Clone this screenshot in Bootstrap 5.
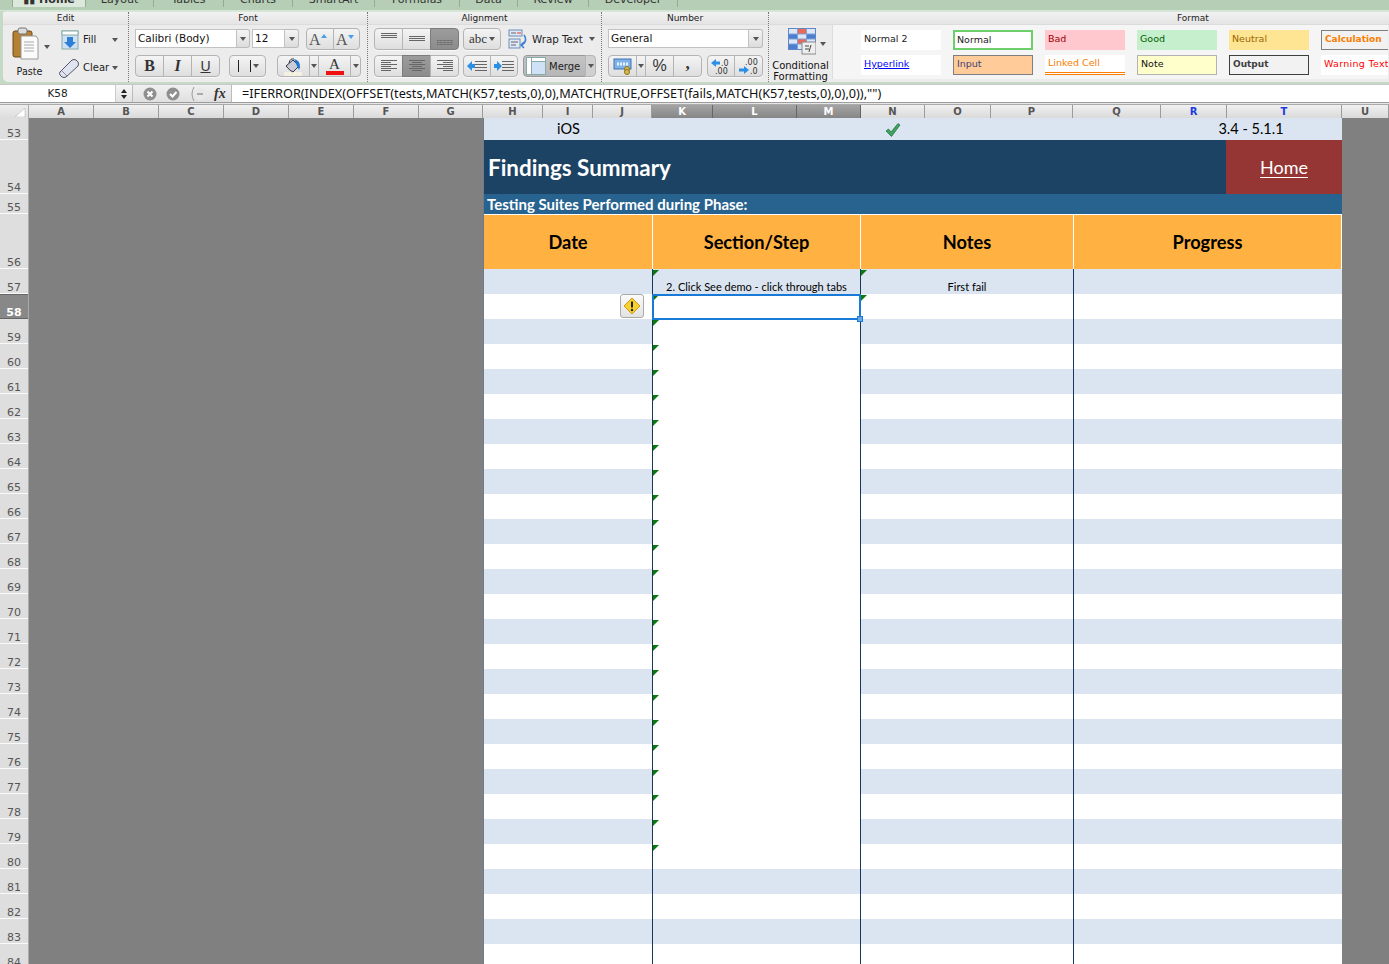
<!DOCTYPE html>
<html lang="en"><head><meta charset="utf-8"><title>Findings Summary</title>
<link href="https://cdn.jsdelivr.net/npm/bootstrap@5.3.0/dist/css/bootstrap.min.css" rel="stylesheet">
<style>
html,body{height:964px;overflow:hidden;background:#808080}
body{font-family:"DejaVu Sans",sans-serif;font-size:10px;line-height:1.2;color:#222}
.app{width:1389px;height:964px;overflow:hidden}
.app>*{flex:none}
.tabs{height:11px;overflow:hidden;background:#b5ceb5;border-bottom:1px solid #d4e6d4}
.tabx{height:10px;border-right:1px solid #8fae90;padding-top:0;text-align:center;color:#333;font-size:11px;line-height:6px;margin-top:-3px}
.tabx.on{background:#dbe8db;border-left:1px solid #8fae90;margin-left:12px;font-weight:700}
.ribbon{height:73px;background:#c4dac4;padding-left:3px;padding-bottom:2px}
.rib-in{height:71px;background:#ececec;border-radius:5px 0 0 5px;border-top:1px solid #d8e6d8}
.grp{flex:none;border-right:1px dotted #777}
.gt{height:13px;text-align:center;font-size:9px;line-height:13px;color:#222;background:linear-gradient(#f2f2f2,#e4e4e4);border-bottom:1px solid #dcdcdc}
.gb{padding-top:3px}
.rw{height:22px;margin-bottom:5px;align-items:stretch}
.btn.xb{--bs-btn-padding-x:0;--bs-btn-padding-y:0;--bs-btn-font-size:10px;--bs-btn-color:#333;--bs-btn-bg:#e6e6e6;--bs-btn-border-color:#b4b4b4;--bs-btn-border-radius:4px;--bs-btn-hover-bg:#e6e6e6;--bs-btn-hover-border-color:#b4b4b4;background:linear-gradient(#f4f4f4,#dedede);height:22px;display:flex;align-items:center;justify-content:center;flex:none;box-shadow:0 1px 0 #f8f8f8}
.btn.xb.act{background:linear-gradient(#9c9c9c,#8c8c8c);border-color:#7c7c7c}
.btn.xb.mer{background:linear-gradient(#c4c4c4,#b6b6b6);border-color:#999}
.arw{display:inline-block;width:0;height:0;border-left:3.5px solid transparent;border-right:3.5px solid transparent;border-top:4px solid #555;flex:none}
.sel-box{height:19px;margin-top:1px;background:#fff;border:1px solid #c2c2c2;font-size:10.5px;line-height:17px;padding-left:2px;color:#111;flex:none}
.sel-arw{height:19px;margin-top:1px;width:14px;background:linear-gradient(#f4f4f4,#dcdcdc);border:1px solid #bbb;border-left:0;border-radius:0 3px 3px 0;flex:none}
.lbl{font-size:10px;color:#222}
.wrapt{font-size:10.3px}
.paste{width:35px;margin-left:9px;margin-top:2px}
.paste-l{font-size:9.6px;margin-top:6px;color:#222;text-align:center}
.lite{width:57px}
.lite-r{height:22px;margin-bottom:6px}
.cf{width:63px;flex:none;padding-top:3px;text-align:center}
.cf-t{font-size:10px;line-height:11px;color:#111;margin-top:5px;white-space:nowrap}
.gallery{width:556px;height:54px;background:#f5f5f5;border-left:1px solid #ddd;padding:5px 0 0 28px;display:grid;grid-template-columns:repeat(6,80px);grid-template-rows:20px 20px;gap:5px 12px;overflow:hidden}
.gt-f{height:13px;font-size:9px;line-height:13px;padding-left:408px;background:linear-gradient(#f2f2f2,#e4e4e4);border-bottom:1px solid #dcdcdc}
.sw{font-size:9.5px;padding:0 0 0 3px;white-space:nowrap;line-height:18px;background:#fff}
.sw.bx{border:1px solid #7f7f7f}
.sw.bld{font-size:9px;font-weight:700}
.fbar{height:19px;background:#fff;border-top:1px solid #c9c9c9;border-bottom:1px solid #9c9c9c;margin-top:0}
.nm{width:116px;text-align:center;font-size:10.5px;line-height:17px;color:#222;border-right:1px solid #ccc}
.stp{width:17px;background:linear-gradient(#f6f6f6,#e2e2e2);border-right:1px solid #bbb}
.fbtn{width:99px;background:linear-gradient(#f0f0f0,#e0e0e0);border-right:1px solid #bbb;padding-left:10px}
.fx{font-family:"Liberation Serif",serif;font-style:italic;font-weight:700;font-size:14px;color:#333;line-height:17px}
.ftx{padding-left:10px;font-size:12.7px;line-height:17px;color:#111;white-space:nowrap;font-family:"Noto Sans",sans-serif}
.gap-s{height:1px;background:#e6e6e6}
.cols{height:14px;background:#d8d8d8;border-top:1px solid #aaa}
.corner{width:29px;position:relative;background:linear-gradient(#eee,#ddd);border-right:1px solid #aaa}
.ch{flex:none;height:13px;text-align:center;font-size:10px;font-weight:700;color:#555;line-height:13px;background:linear-gradient(#f0f0f0,#dadada);border-right:1px solid #9c9c9c}
.ch.dk{background:linear-gradient(#a4a4a4,#868686);color:#fff;border-right-color:#666}
.ch.bl{color:#1c3ce0}
.ch.fill{flex:1}
.main{align-items:flex-start}
.rh{width:28px;flex:none;background:#dedede;border-right:1px solid #aaa;box-sizing:content-box}
.rn{height:25px;border-bottom:1px solid #fafafa;font-size:11px;line-height:11px;color:#555;text-align:center;display:flex;align-items:flex-end;justify-content:center;padding-bottom:0}
.rn.cur{background:#888;color:#fff;font-weight:700;border-top:1px solid #666;border-bottom:1px solid #666}
.h22{height:22px}.h54{height:54px}.h20{height:20px}.h55{height:55px}
.gray{width:454px;flex:none;height:850px;background:#808080}
.sheet{width:859px;flex:none;background:#fff;border-left:1px solid #6f7b86;font-family:Lato,"Liberation Sans",sans-serif;color:#000}
.s53{height:22px;background:#dbe5f1;font-size:14.5px;line-height:22px}
.s54{height:54px;background:#1c4364;color:#fff}
.s54 .ttl{font-weight:700;font-size:22.4px;padding-left:4px;line-height:56px}
.homec{width:116px;background:#963634;text-align:center;font-size:18px;line-height:54px;flex:none}
.homec a{color:#fff;text-decoration:underline;text-underline-offset:3px}
.s55{height:20px;background:#28628f;color:#fff;font-weight:700;font-size:15px;line-height:21px;padding-left:3px}
.s56{height:55px;display:grid;grid-template-columns:169px 208px 213px 268px;background:#ffb142;border-top:1px solid #fff}
.s56>div{font-weight:700;font-size:18.2px;line-height:54px;text-align:center;border-right:1px solid #fff}
.sr{height:25px;display:grid;grid-template-columns:169px 208px 213px 268px}
.sr.bd{background:#dbe5f1}
.sr>div{position:relative;font-size:11px;line-height:12px;text-align:center;padding-top:12px;white-space:nowrap}
.sr>div:nth-child(-n+3){border-right:1px solid #17375d}
.k{background:#fff}
.tg::before{content:"";position:absolute;left:0;top:1px;border-top:6px solid #0a7a0a;border-right:6px solid transparent}
.cursel{position:absolute;left:-1px;top:0;width:209px;height:26px;border:2px solid #1a7ad8;z-index:2}
.hnd{position:absolute;right:-4px;bottom:-4px;width:6px;height:6px;background:#6aa8e8;border:1px solid #1a7ad8}
.wbtn{position:absolute;left:-33px;top:0;width:24px;height:24px;border:1px solid #aaa;border-radius:3px;background:linear-gradient(#fbfbfb,#e2e2e2);display:flex;align-items:center;justify-content:center;z-index:3;padding:0}
</style></head><body>
<svg width="0" height="0" class="position-absolute">
<defs>
<symbol id="ltop" viewBox="0 0 18 14"><path d="M1 1.500h16M1 3.500h16M1 5.500h16" stroke="#666" fill="none"/></symbol>
<symbol id="lmid" viewBox="0 0 18 14"><path d="M1 4.500h16M1 6.500h16M1 8.500h16" stroke="#666" fill="none"/></symbol>
<symbol id="lbot" viewBox="0 0 18 14"><path d="M1 8.500h16M1 10.500h16M1 12.500h16" stroke="#666" fill="none" stroke-dasharray="1 .4"/></symbol>
<symbol id="lleft" viewBox="0 0 18 14"><path d="M1 1.500h16M1 3.500h10M1 5.500h16M1 7.500h10M1 9.500h16M1 11.500h10" stroke="#666" fill="none"/></symbol>
<symbol id="lcen" viewBox="0 0 18 14"><path d="M1 1.500h16M4 3.500h10M1 5.500h16M4 7.500h10M1 9.500h16M4 11.500h10" stroke="#666" fill="none"/></symbol>
<symbol id="lright" viewBox="0 0 18 14"><path d="M1 1.500h16M7 3.500h10M1 5.500h16M7 7.500h10M1 9.500h16M7 11.500h10" stroke="#666" fill="none"/></symbol>
</defs></svg>
<div class="app d-flex flex-column">
 <div class="tabs d-flex">
  <div class="tabx on" style="width:74px">▮▮ Home</div><div class="tabx" style="width:68px">Layout</div><div class="tabx" style="width:70px">Tables</div><div class="tabx" style="width:69px">Charts</div><div class="tabx" style="width:82px">SmartArt</div><div class="tabx" style="width:85px">Formulas</div><div class="tabx" style="width:58px">Data</div><div class="tabx" style="width:71px">Review</div><div class="tabx" style="width:89px">Developer</div>
 </div>
 <div class="ribbon"><div class="rib-in d-flex">
  <!-- Edit -->
  <div class="grp" style="width:126px"><div class="gt">Edit</div>
   <div class="d-flex">
    <div class="paste">
     <svg width="27" height="33" viewBox="0 0 27 33"><rect x="1" y="4" width="19" height="26" rx="2" fill="#b57f34" stroke="#6e4a18"/><rect x="6" y="1" width="9" height="6" rx="2" fill="#ddd" stroke="#777"/><path d="M9 9h15l2 3v20H9z" fill="#fbfbfb" stroke="#999"/><path d="M12 15h10M12 18h10M12 21h10M12 24h10" stroke="#aaa"/></svg>
     <div class="paste-l">Paste</div>
    </div>
    <span class="arw" style="margin:20px 0 0 -3px"></span>
    <div class="lite" style="margin-left:11px;padding-top:4px">
     <div class="lite-r d-flex align-items-center"><svg width="18" height="20" viewBox="0 0 18 20"><rect x="1" y="1" width="16" height="18" fill="#cfe0f5" stroke="#8aa"/><rect x="1" y="1" width="16" height="4" fill="#fff" stroke="#8aa"/><path d="M6 7h6v5h3l-6 6-6-6h3z" fill="#2c7fd6"/></svg><span class="lbl me-auto" style="margin-left:4px">Fill</span><span class="arw"></span></div>
     <div class="lite-r d-flex align-items-center" style="margin-left:-2px"><svg width="20" height="20" viewBox="0 0 20 20"><path d="M1 14 13 2q2-1 4 0l2 2q1 2 0 4L7 19q-2 1-4 0l-2-2q-1-2 0-3z" fill="#dfe4f0" stroke="#556"/><path d="M3 13l5 5" stroke="#889"/></svg><span class="lbl me-auto" style="margin-left:4px">Clear</span><span class="arw" style="margin-left:-9px"></span></div>
    </div>
   </div>
  </div>
  <!-- Font -->
  <div class="grp" style="width:239px"><div class="gt">Font</div><div class="gb">
   <div class="rw d-flex" style="margin-left:6px">
    <div class="sel-box" style="width:102px">Calibri (Body)</div><div class="sel-arw d-flex align-items-center justify-content-center" style="width:13px"><span class="arw"></span></div>
    <div class="sel-box" style="width:33px;margin-left:2px">12</div><div class="sel-arw d-flex align-items-center justify-content-center"><span class="arw"></span></div>
    <div class="btn-group" style="margin-left:7px" role="group">
     <button class="btn xb" style="width:28px"><svg width="22" height="16" viewBox="0 0 22 16"><text x="0" y="14" font-family="Liberation Serif" font-size="16" fill="#555">A</text><path d="M12 7l3-4 3 4z" fill="#4a9ee8"/></svg></button>
     <button class="btn xb" style="width:27px"><svg width="22" height="16" viewBox="0 0 22 16"><text x="0" y="14" font-family="Liberation Serif" font-size="16" fill="#555">A</text><path d="M12 4l3 4 3-4z" fill="#4a9ee8"/></svg></button>
    </div>
   </div>
   <div class="rw d-flex" style="margin-left:6px">
    <div class="btn-group" role="group">
     <button class="btn xb" style="width:29px;font:700 16px 'Liberation Serif',serif">B</button>
     <button class="btn xb" style="width:29px;font:italic 700 16px 'Liberation Serif',serif">I</button>
     <button class="btn xb text-decoration-underline" style="width:29px;font:400 14px 'Liberation Sans',sans-serif">U</button>
    </div>
    <button class="btn xb" style="width:37px;margin-left:9px;gap:2px"><svg width="19" height="14" viewBox="0 0 19 14"><path d="M4.500 1v12M16.500 1v12" stroke="#222"/></svg><span class="arw" style="margin-left:-2px;margin-right:2px"></span></button>
    <div class="btn-group" style="margin-left:11px" role="group">
     <button class="btn xb" style="width:33px"><svg width="21" height="19" viewBox="0 0 21 19"><rect x="1" y="15" width="18" height="4" fill="#f4f0e2"/><path d="M3 9 10 3l6 6-6 6q-3-1-7-6z" fill="#c9ccd6" stroke="#334"/><path d="M6 6q1-5 5-4" stroke="#334" fill="none"/><path d="M11 2q6 1 6 8l-1 3-2-4z" fill="#1f74d0"/></svg></button>
     <button class="btn xb" style="width:10px"><span class="arw"></span></button>
     <button class="btn xb" style="width:33px;flex-direction:column"><span style="font:400 15px/14px 'Liberation Serif',serif">A</span><span style="width:18px;height:4px;background:#f01010;display:block"></span></button>
     <button class="btn xb" style="width:11px"><span class="arw"></span></button>
    </div>
   </div>
  </div></div>
  <!-- Alignment -->
  <div class="grp" style="width:234px"><div class="gt">Alignment</div><div class="gb">
   <div class="rw d-flex" style="margin-left:6px">
    <div class="btn-group" role="group">
     <button class="btn xb" style="width:29px"><svg width="18" height="14"><use href="#ltop"/></svg></button>
     <button class="btn xb" style="width:29px"><svg width="18" height="14"><use href="#lmid"/></svg></button>
     <button class="btn xb act" style="width:29px"><svg width="18" height="14"><use href="#lbot"/></svg></button>
    </div>
    <button class="btn xb" style="width:38px;margin-left:4px;gap:2px;font:400 13px 'Liberation Serif',serif">abc<span class="arw"></span></button>
    <div class="d-flex align-items-center" style="margin-left:7px"><svg width="21" height="20" viewBox="0 0 21 20"><rect x="1" y="1" width="13" height="6" fill="#dfe8f4" stroke="#6a8db8"/><path d="M3 4h5" stroke="#666"/><path d="M9 4h4" stroke="#e33"/><rect x="1" y="10" width="11" height="9" fill="#dfe8f4" stroke="#6a8db8"/><path d="M3 13h7M3 16h5" stroke="#666"/><path d="M16 6q4 6-2 10M16 13l-3 3 3 3" stroke="#3a7fd0" stroke-width="1.500" fill="none"/></svg><span class="lbl wrapt" style="margin:0 6px 0 3px;white-space:nowrap">Wrap Text</span><span class="arw"></span></div>
   </div>
   <div class="rw d-flex" style="margin-left:6px">
    <div class="btn-group" role="group">
     <button class="btn xb" style="width:29px"><svg width="18" height="14"><use href="#lleft"/></svg></button>
     <button class="btn xb act" style="width:29px"><svg width="18" height="14"><use href="#lcen"/></svg></button>
     <button class="btn xb" style="width:29px"><svg width="18" height="14"><use href="#lright"/></svg></button>
    </div>
    <div class="btn-group" style="margin-left:4px" role="group">
     <button class="btn xb" style="width:28px"><svg width="22" height="14" viewBox="0 0 22 14"><path d="M9 2.500h12M9 5.500h12M9 8.500h12M9 11.500h12" stroke="#666"/><path d="M1 7l5-5v3h3v4H6v3z" fill="#2c8fe6"/></svg></button>
     <button class="btn xb" style="width:28px"><svg width="22" height="14" viewBox="0 0 22 14"><path d="M9 2.500h12M9 5.500h12M9 8.500h12M9 11.500h12" stroke="#666"/><path d="M9 7 4 2v3H1v4h3v3z" fill="#2c8fe6"/></svg></button>
    </div>
    <div class="btn-group" style="margin-left:5px" role="group">
     <button class="btn xb mer" style="width:63px;gap:3px;justify-content:flex-start;padding-left:2px"><svg width="20" height="18" viewBox="0 0 20 18"><rect x=".5" y=".5" width="19" height="17" fill="#cfe1f5" stroke="#8aa"/><path d="M.5 4.500h19" stroke="#8aa"/><rect x=".5" y=".5" width="5" height="17" fill="#fff" stroke="#8aa"/><rect x="6" y="1" width="13" height="3" fill="#fff"/></svg><span class="lbl">Merge</span></button>
     <button class="btn xb" style="width:11px;background:#d0d0d0"><span class="arw"></span></button>
    </div>
   </div>
  </div></div>
  <!-- Number -->
  <div class="grp" style="width:167px"><div class="gt">Number</div><div class="gb">
   <div class="rw d-flex" style="margin-left:6px"><div class="sel-box" style="width:141px">General</div><div class="sel-arw d-flex align-items-center justify-content-center"><span class="arw"></span></div></div>
   <div class="rw d-flex" style="margin-left:6px">
    <div class="btn-group" role="group">
     <button class="btn xb" style="width:29px"><svg width="20" height="17" viewBox="0 0 20 17"><rect x="1" y="1" width="17" height="10" fill="#7fb2e8" stroke="#3f74b0"/><path d="M4 6h11" stroke="#e8f2ff" stroke-width="3" stroke-dasharray="2 1"/><circle cx="14" cy="11" r="2.500" fill="#d8b84a" stroke="#8a7420"/><circle cx="14" cy="14" r="2.500" fill="#d8b84a" stroke="#8a7420"/></svg></button>
     <button class="btn xb" style="width:10px"><span class="arw"></span></button>
     <button class="btn xb" style="width:29px;font:400 16px 'Liberation Sans',sans-serif">%</button>
     <button class="btn xb" style="width:29px;font:700 17px/10px 'Liberation Serif',serif;padding-bottom:4px">,</button>
    </div>
    <div class="btn-group" style="margin-left:5px" role="group">
     <button class="btn xb" style="width:28px"><svg width="22" height="17" viewBox="0 0 22 17"><path d="M1 5l5-4v2.500h4v3H6V9z" fill="#2c8fe6"/><text x="11" y="8" font-size="8" font-family="DejaVu Sans" fill="#333">.0</text><text x="5" y="16" font-size="8" font-family="DejaVu Sans" fill="#333">.00</text></svg></button>
     <button class="btn xb" style="width:29px"><svg width="22" height="17" viewBox="0 0 22 17"><text x="7" y="7" font-size="8" font-family="DejaVu Sans" fill="#333">.00</text><path d="M11 12 6 8v2.500H1v3h5V16z" fill="#2c8fe6"/><text x="12" y="16" font-size="8" font-family="DejaVu Sans" fill="#333">.0</text></svg></button>
    </div>
   </div>
  </div></div>
  <!-- Format -->
  <div class="flex-grow-1 overflow-hidden"><div class="gt-f">Format</div>
   <div class="d-flex">
    <div class="cf">
     <div class="d-flex justify-content-center" style="gap:4px;padding-left:13px"><svg width="28" height="27" viewBox="0 0 28 27"><rect x=".5" y=".5" width="27" height="21" fill="#dbe7f6" stroke="#5f86c2"/><rect x="9" y="1" width="9" height="5" fill="#e8685a"/><rect x="9" y="11" width="9" height="5" fill="#e8685a"/><rect x="1" y="6" width="8" height="5" fill="#4a7ed0"/><rect x="18" y="6" width="9" height="5" fill="#4a7ed0"/><rect x="1" y="16" width="8" height="5" fill="#4a7ed0"/><path d="M9.500.5v21M18.500.5v21M.5 6h27M.5 11h27M.5 16h27" stroke="#7fa0d0"/><rect x="14" y="14" width="14" height="12" fill="#eee" stroke="#888"/><path d="M17 18h4M17 21h4M23 17l-2 7" stroke="#444"/></svg><span class="arw" style="margin-top:14px"></span></div>
     <div class="cf-t">Conditional<br>Formatting</div>
    </div>
    <div class="gallery">
     <div class="sw">Normal 2</div>
     <div class="sw" style="border:2px solid #6ccf6c;padding-left:2px;line-height:15px">Normal</div>
     <div class="sw" style="background:#ffc7ce;color:#9c0006">Bad</div>
     <div class="sw" style="background:#c6efce;color:#006100">Good</div>
     <div class="sw" style="background:#fde594;color:#9c6500">Neutral</div>
     <div class="sw bx bld" style="background:#f2f2f2;color:#fa7d00;line-height:16px">Calculation</div>
     <div class="sw"><a href="#" style="color:#0000ff">Hyperlink</a></div>
     <div class="sw bx" style="background:#ffcc99;color:#3f3f76;line-height:16px">Input</div>
     <div class="sw" style="color:#fa7d00;border-bottom:3px double #fa7d00;line-height:16px">Linked Cell</div>
     <div class="sw bx" style="background:#ffffcc;color:#111;border-color:#b2b2b2;line-height:16px">Note</div>
     <div class="sw bx bld" style="background:#f2f2f2;color:#3f3f3f;border-color:#3f3f3f;line-height:16px">Output</div>
     <div class="sw" style="color:#ff0000;letter-spacing:.3px">Warning Text</div>
    </div>
   </div>
  </div>
 </div></div>
 <div class="fbar d-flex">
  <div class="nm">K58</div>
  <div class="stp d-flex flex-column align-items-center justify-content-center" style="gap:2px"><span class="arw" style="transform:rotate(180deg);border-top-color:#222"></span><span class="arw" style="border-top-color:#222"></span></div>
  <div class="fbtn d-flex align-items-center" style="gap:9px">
   <svg width="14" height="14" viewBox="0 0 14 14"><circle cx="7" cy="7" r="6.500" fill="#8f8f8f"/><path d="M4.500 4.500l5 5M9.500 4.500l-5 5" stroke="#fff" stroke-width="2"/></svg>
   <svg width="14" height="14" viewBox="0 0 14 14"><circle cx="7" cy="7" r="6.500" fill="#8f8f8f"/><path d="M4 7l2.500 2.500L10.500 5" stroke="#fff" stroke-width="2" fill="none"/></svg>
   <svg width="17" height="16" viewBox="0 0 17 16" style="margin-left:1px"><path d="M4 1Q0 8 4 15" stroke="#999" fill="none"/><circle cx="10" cy="8" r="6" fill="#e8e8e8"/><path d="M7 8h6" stroke="#aaa" stroke-width="2"/></svg>
   <span class="fx" style="margin-left:-2px">fx</span>
  </div>
  <div class="ftx">=IFERROR(INDEX(OFFSET(tests,MATCH(K57,tests,0),0),MATCH(TRUE,OFFSET(fails,MATCH(K57,tests,0),0),0)),"")</div>
 </div>
 <div class="gap-s"></div>
 <div class="cols d-flex">
  <div class="corner"><svg width="11" height="9" viewBox="0 0 11 9" class="position-absolute" style="right:2px;bottom:1px"><path d="M0 9 10 0v9z" fill="#fff" stroke="#aaa" stroke-width=".5"/></svg></div>
  <div class="ch" style="width:65px">A</div><div class="ch" style="width:65px">B</div><div class="ch" style="width:65px">C</div><div class="ch" style="width:65px">D</div><div class="ch" style="width:65px">E</div><div class="ch" style="width:65px">F</div><div class="ch" style="width:64px">G</div><div class="ch" style="width:60px">H</div><div class="ch" style="width:50px">I</div><div class="ch" style="width:59px">J</div><div class="ch dk" style="width:61px">K</div><div class="ch dk" style="width:84px">L</div><div class="ch dk" style="width:64px">M</div><div class="ch" style="width:64px">N</div><div class="ch" style="width:66px">O</div><div class="ch" style="width:82px">P</div><div class="ch" style="width:88px">Q</div><div class="ch bl" style="width:66px">R</div><div class="ch bl" style="width:115px">T</div><div class="ch fill">U</div>
 </div>
 <div class="main d-flex">
  <div class="rh">
   <div class="rn h22">53</div><div class="rn h54">54</div><div class="rn h20">55</div><div class="rn h55">56</div><div class="rn">57</div><div class="rn cur">58</div><div class="rn">59</div><div class="rn">60</div><div class="rn">61</div><div class="rn">62</div><div class="rn">63</div><div class="rn">64</div><div class="rn">65</div><div class="rn">66</div><div class="rn">67</div><div class="rn">68</div><div class="rn">69</div><div class="rn">70</div><div class="rn">71</div><div class="rn">72</div><div class="rn">73</div><div class="rn">74</div><div class="rn">75</div><div class="rn">76</div><div class="rn">77</div><div class="rn">78</div><div class="rn">79</div><div class="rn">80</div><div class="rn">81</div><div class="rn">82</div><div class="rn">83</div><div class="rn">84</div>
  </div>
  <div class="gray"></div>
  <div class="sheet">
   <div class="s53 d-flex"><div class="text-center" style="width:169px">iOS</div><div style="width:208px"></div><div class="text-center" style="width:64px"><svg width="16" height="14" viewBox="0 0 16 14"><path d="M1 8l2.500-2 2.500 3L13 .5l2 1.500L6.500 13.500z" fill="#3ea35f" stroke="#1d6a3a" stroke-width=".7"/></svg></div><div class="text-center" style="width:417px;padding-left:235px">3.4 - 5.1.1</div></div>
   <div class="s54 d-flex"><div class="ttl flex-grow-1">Findings Summary</div><div class="homec"><a href="#">Home</a></div></div>
   <div class="s55">Testing Suites Performed during Phase:</div>
   <div class="s56"><div>Date</div><div>Section/Step</div><div>Notes</div><div>Progress</div></div>
   <div class="sr bd"><div></div><div class="tg">2. Click See demo - click through tabs</div><div class="tg">First fail</div><div></div></div>
   <div class="sr"><div></div><div class="tg"><button class="wbtn" aria-label="Warning"><svg width="18" height="18" viewBox="0 0 18 18"><path d="M9 1l8 8-8 8-8-8z" fill="#f8d030" stroke="#c89a10"/><path d="M9 4.500v6" stroke="#222" stroke-width="2"/><circle cx="9" cy="13" r="1.200" fill="#222"/></svg></button><span class="cursel"><span class="hnd"></span></span></div><div class="tg"></div><div></div></div>
   <div class="sr bd"><div></div><div class="k tg"></div><div></div><div></div></div>
   <div class="sr"><div></div><div class="k tg"></div><div></div><div></div></div>
   <div class="sr bd"><div></div><div class="k tg"></div><div></div><div></div></div>
   <div class="sr"><div></div><div class="k tg"></div><div></div><div></div></div>
   <div class="sr bd"><div></div><div class="k tg"></div><div></div><div></div></div>
   <div class="sr"><div></div><div class="k tg"></div><div></div><div></div></div>
   <div class="sr bd"><div></div><div class="k tg"></div><div></div><div></div></div>
   <div class="sr"><div></div><div class="k tg"></div><div></div><div></div></div>
   <div class="sr bd"><div></div><div class="k tg"></div><div></div><div></div></div>
   <div class="sr"><div></div><div class="k tg"></div><div></div><div></div></div>
   <div class="sr bd"><div></div><div class="k tg"></div><div></div><div></div></div>
   <div class="sr"><div></div><div class="k tg"></div><div></div><div></div></div>
   <div class="sr bd"><div></div><div class="k tg"></div><div></div><div></div></div>
   <div class="sr"><div></div><div class="k tg"></div><div></div><div></div></div>
   <div class="sr bd"><div></div><div class="k tg"></div><div></div><div></div></div>
   <div class="sr"><div></div><div class="k tg"></div><div></div><div></div></div>
   <div class="sr bd"><div></div><div class="k tg"></div><div></div><div></div></div>
   <div class="sr"><div></div><div class="k tg"></div><div></div><div></div></div>
   <div class="sr bd"><div></div><div class="k tg"></div><div></div><div></div></div>
   <div class="sr"><div></div><div class="k tg"></div><div></div><div></div></div>
   <div class="sr bd"><div></div><div class="k tg"></div><div></div><div></div></div>
   <div class="sr"><div></div><div class="k tg"></div><div></div><div></div></div>
   <div class="sr bd"><div></div><div></div><div></div><div></div></div>
   <div class="sr"><div></div><div></div><div></div><div></div></div>
   <div class="sr bd"><div></div><div></div><div></div><div></div></div>
   <div class="sr"><div></div><div></div><div></div><div></div></div>
  </div>
  <div class="flex-grow-1"></div>
 </div>
</div>
<script src="https://cdn.jsdelivr.net/npm/bootstrap@5.3.0/dist/js/bootstrap.bundle.min.js"></script>
</body></html>
